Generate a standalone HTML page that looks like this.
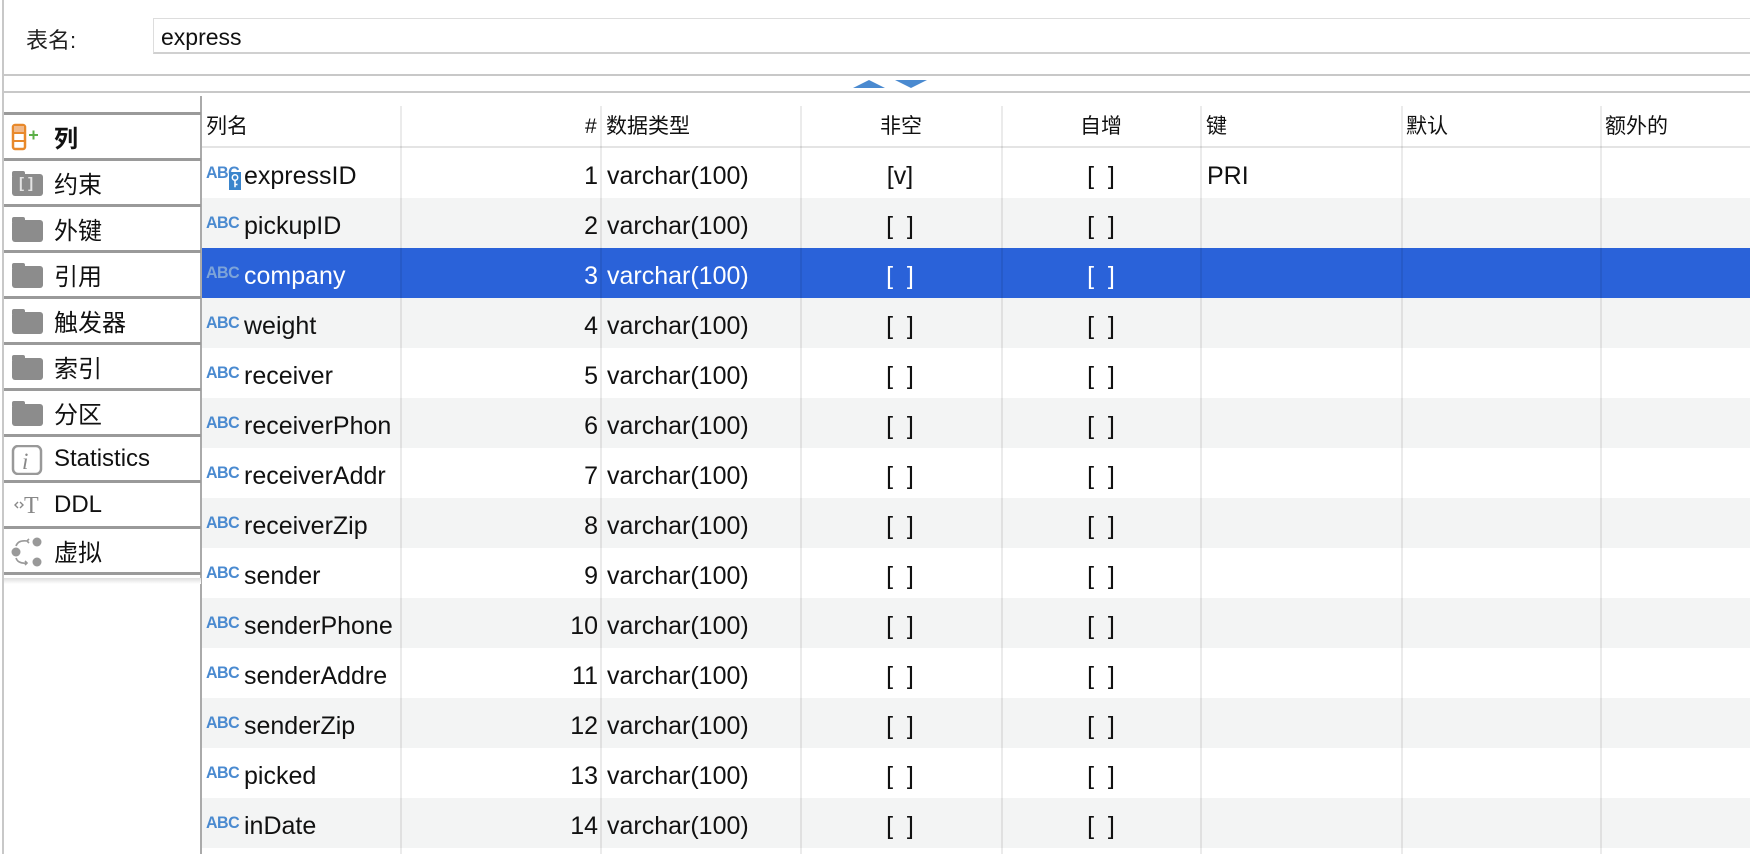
<!DOCTYPE html>
<html><head><meta charset="utf-8"><style>
*{margin:0;padding:0;box-sizing:border-box}
body{width:1750px;height:854px;overflow:hidden;background:#fff;font-family:"Liberation Sans","Noto Sans CJK SC",sans-serif;color:#111;position:relative}
.abs{position:absolute}
.tab{position:absolute;left:4px;width:197px;height:46px;border-bottom:3px solid #9a9a9a;font-size:24px;display:flex;align-items:center}
.tab .ic{width:32px;height:28px;margin-left:7px;margin-right:11px;position:relative}
.folder{position:absolute;left:1px;top:5px;width:31px;height:22px;background:#8c8c8c;border-radius:3px}
.folder:before{content:"";position:absolute;left:0;top:-3px;width:13px;height:5px;background:#8c8c8c;border-radius:2px 2px 0 0}
.row{position:absolute;left:202px;width:1548px;height:50px;font-size:25px}
.row.alt{background:#f3f4f4}
.row.sel{background:#2a62d9;color:#fff}
.c{position:absolute;top:4px;height:46px;line-height:48px;white-space:nowrap;overflow:hidden}
.abc{font:bold 16px "Liberation Sans",sans-serif;color:#4a8ad0;letter-spacing:-0.5px;position:absolute;left:4px;top:17px;transform:scaleY(1.05)}
.sel .abc{color:#7ea4d8}
.vl{position:absolute;top:106px;width:2px;height:748px;background:rgba(0,0,0,0.08)}
.hd{position:absolute;top:107px;height:40px;line-height:40px;font-size:21px}
</style></head><body>
<div class="abs" style="left:0;top:0;width:4px;height:854px;background:#fff;border-right:2px solid #c8c8c8"></div>
<div class="abs" style="left:26px;top:23px;font-size:22px;color:#222">表名:</div>
<div class="abs" style="left:153px;top:18px;width:1600px;height:36px;border:1px solid #ddd;border-bottom:2px solid #d0d0d0;font-size:23px;line-height:36px;padding-left:7px">express</div>
<div class="abs" style="left:4px;top:74px;width:1746px;height:2px;background:#c8c8c8"></div>
<div class="abs" style="left:4px;top:91px;width:1746px;height:2px;background:#c8c8c8"></div>
<svg class="abs" style="left:850px;top:78px" width="80" height="12"><polygon points="3,10 19,2 35,10" fill="#4a8ad0"/><polygon points="45,2 77,2 61,10" fill="#4a8ad0"/></svg>
<div class="abs" style="left:200px;top:96px;width:2px;height:758px;background:#aaa"></div>
<div class="abs" style="left:4px;top:112px;width:197px;height:3px;background:#9a9a9a"></div>
<div class="tab" style="top:115px"><div class="ic"><svg width="32" height="28"><rect x="2" y="2" width="12" height="24" rx="2" fill="none" stroke="#e8892b" stroke-width="2.5"/><line x1="2" y1="10" x2="14" y2="10" stroke="#e8892b" stroke-width="2"/><line x1="2" y1="18" x2="14" y2="18" stroke="#e8892b" stroke-width="2"/><rect x="3" y="3" width="10" height="6" fill="#f0b98a"/><path d="M18 12h9M22.5 7.5v9" stroke="#5cb048" stroke-width="2"/></svg></div><b>列</b></div>
<div class="tab" style="top:161px"><div class="ic"><div class="folder"></div><span class="abs" style="left:8px;top:6px;color:#e4e4e4;font-size:15px;font-weight:bold">[ ]</span></div>约束</div>
<div class="tab" style="top:207px"><div class="ic"><div class="folder"></div></div>外键</div>
<div class="tab" style="top:253px"><div class="ic"><div class="folder"></div></div>引用</div>
<div class="tab" style="top:299px"><div class="ic"><div class="folder"></div></div>触发器</div>
<div class="tab" style="top:345px"><div class="ic"><div class="folder"></div></div>索引</div>
<div class="tab" style="top:391px"><div class="ic"><div class="folder"></div></div>分区</div>
<div class="tab" style="top:437px"><div class="ic"><svg width="32" height="30"><rect x="2" y="1" width="28" height="28" rx="5" fill="none" stroke="#999" stroke-width="2.5"/><text x="11" y="24" font-family="Liberation Serif" font-style="italic" font-size="23" fill="#888">i</text></svg></div>Statistics</div>
<div class="tab" style="top:483px"><div class="ic"><svg width="32" height="28"><path d="M7 11l-3 3 3 3M9 11l3 3-3 3" stroke="#888" fill="none" stroke-width="1.4"/><text x="13" y="22" font-family="Liberation Serif" font-size="24" fill="#888">T</text></svg></div>DDL</div>
<div class="tab" style="top:529px"><div class="ic"><svg width="32" height="30"><circle cx="5" cy="15" r="4.5" fill="#999"/><circle cx="26" cy="5" r="4.5" fill="#999"/><circle cx="26" cy="25" r="4.5" fill="#999"/><path d="M5 9q2-6 11-5M18 2l-2 2 2 2M5 21q2 6 11 5M14 24l2 2-2 2" stroke="#999" fill="none" stroke-width="1.6"/></svg></div>虚拟</div>
<div class="abs" style="left:4px;top:578px;width:197px;height:6px;background:linear-gradient(#ddd,#fff)"></div>
<div class="hd" style="left:206px">列名</div>
<div class="hd" style="left:585px">#</div>
<div class="hd" style="left:606px">数据类型</div>
<div class="hd" style="left:880px">非空</div>
<div class="hd" style="left:1080px">自增</div>
<div class="hd" style="left:1206px">键</div>
<div class="hd" style="left:1406px">默认</div>
<div class="hd" style="left:1605px">额外的</div>
<div class="abs" style="left:202px;top:146px;width:1548px;height:2px;background:#e4e4e4"></div>
<div id="rows"></div>
<div class="vl" style="left:400px"></div><div class="vl" style="left:600px"></div><div class="vl" style="left:800px"></div><div class="vl" style="left:1001px"></div><div class="vl" style="left:1200px"></div><div class="vl" style="left:1401px"></div><div class="vl" style="left:1600px"></div>
<script>
var names=["expressID","pickupID","company","weight","receiver","receiverPhon","receiverAddr","receiverZip","sender","senderPhone","senderAddre","senderZip","picked","inDate"];
var h="";
for(var i=0;i<14;i++){var t=148+i*50;var cls="row"+(i==2?" sel":(i%2==1?" alt":""));
h+='<div class="'+cls+'" style="top:'+t+'px"><span class="abc">ABC</span>'+(i==0?'<svg style="position:absolute;left:27px;top:24px" width="12" height="18"><rect width="12" height="18" fill="#3a85cc"/><circle cx="6" cy="5.5" r="2.7" fill="none" stroke="#fff" stroke-width="1.5"/><path d="M6 8.2v7M6 12.5h2.5" stroke="#fff" stroke-width="1.5"/></svg>':'')+
'<div class="c" style="left:42px;width:158px">'+names[i]+'</div>'+
'<div class="c" style="left:200px;width:196px;text-align:right">'+(i+1)+'</div>'+
'<div class="c" style="left:405px">varchar(100)</div>'+
'<div class="c" style="left:598px;width:200px;text-align:center">'+(i==0?'[v]':'[&nbsp;&nbsp;]')+'</div>'+
'<div class="c" style="left:799px;width:200px;text-align:center">[&nbsp;&nbsp;]</div>'+
(i==0?'<div class="c" style="left:1005px">PRI</div>':'')+'</div>';}
document.getElementById("rows").innerHTML=h;
</script>
</body></html>
